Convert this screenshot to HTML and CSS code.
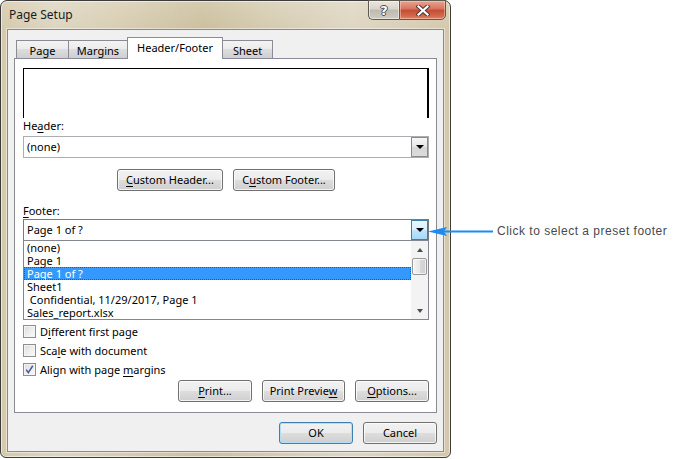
FILE: index.html
```html
<!DOCTYPE html>
<html lang="en">
<head>
<meta charset="utf-8">
<title>Page Setup</title>
<link rel="stylesheet" href="styles.css">
</head>
<body>
<div class="stage">
  <div class="window">
    <div class="titlebar">
      <span class="title">Page Setup</span>
      <div class="caption">
        <span class="cap-btn help"><span class="help-glyph">?</span></span>
        <span class="cap-btn close">
          <svg width="14" height="11" viewBox="0 0 14 11">
            <path d="M2.5 1.5 L11.5 9.5 M11.5 1.5 L2.5 9.5" stroke="#4a3a36" stroke-width="4.2" stroke-linecap="square"/>
            <path d="M2.5 1.5 L11.5 9.5 M11.5 1.5 L2.5 9.5" stroke="#ffffff" stroke-width="2.2" stroke-linecap="square"/>
          </svg>
        </span>
      </div>
    </div>

    <div class="client">
      <div class="tabs">
        <span class="tab tab-page">Page</span>
        <span class="tab tab-margins">Margins</span>
        <span class="tab tab-hf active">Header/Footer</span>
        <span class="tab tab-sheet">Sheet</span>
      </div>

      <div class="panel">
        <div class="preview"></div>

        <div class="field-label">He<u>a</u>der:</div>
        <div class="select">
          <span class="select-value">(none)</span>
          <span class="drop-btn"><span class="tri-down"></span></span>
        </div>

        <div class="custom-row">
          <button class="btn btn-custom-header"><u>C</u>ustom Header...</button>
          <button class="btn btn-custom-footer">C<u>u</u>stom Footer...</button>
        </div>

        <div class="field-label footer-label"><u>F</u>ooter:</div>
        <div class="select select-open">
          <span class="select-value">Page 1 of ?</span>
          <span class="drop-btn hot"><span class="tri-down"></span></span>
        </div>

        <div class="listbox">
          <ul class="list-items">
            <li>(none)</li>
            <li>Page 1</li>
            <li class="selected">Page 1 of ?</li>
            <li>Sheet1</li>
            <li>&nbsp;Confidential, 11/29/2017, Page 1</li>
            <li>Sales_report.xlsx</li>
          </ul>
          <div class="scrollbar">
            <span class="sb-arrow"><span class="tri-up-small"></span></span>
            <div class="sb-track">
              <span class="sb-thumb"></span>
            </div>
            <span class="sb-arrow"><span class="tri-down-small"></span></span>
          </div>
        </div>

        <div class="checks">
          <label class="check-row"><span class="checkbox"></span><span>D<u>i</u>fferent first page</span></label>
          <label class="check-row"><span class="checkbox"></span><span>Sca<u>l</u>e with document</span></label>
          <label class="check-row"><span class="checkbox checked">
            <svg width="11" height="11" viewBox="0 0 11 11"><path d="M2.2 5.6 L4.3 8.6 L8.8 1.8" fill="none" stroke="#4a5f9c" stroke-width="1.6"/></svg>
          </span><span>Align with page <u>m</u>argins</span></label>
        </div>

        <div class="panel-buttons">
          <button class="btn btn-print"><u>P</u>rint...</button>
          <button class="btn btn-preview">Print Previe<u>w</u></button>
          <button class="btn btn-options"><u>O</u>ptions...</button>
        </div>
      </div>

      <div class="dialog-buttons">
        <button class="btn btn-default">OK</button>
        <button class="btn">Cancel</button>
      </div>
    </div>
  </div>

  <div class="callout">
    <svg class="callout-arrow" width="66" height="11" viewBox="0 0 66 11">
      <path d="M16 5.5 H65" stroke="#1b8cf6" stroke-width="2"/>
      <path d="M0 5.5 L19 1 L16 5.5 L19 10 Z" fill="#1b8cf6"/>
    </svg>
    <span class="callout-text">Click to select a preset footer</span>
  </div>
</div>
</body>
</html>
```

FILE: styles.css
```css
* {
  box-sizing: border-box;
}

html,
body {
  margin: 0;
  padding: 0;
  background: #ffffff;
}

body {
  width: 675px;
  height: 459px;
  overflow: hidden;
  font-family: "Noto Sans", "Open Sans", sans-serif;
  font-size: 11px;
  color: #000000;
}

u {
  text-decoration: underline;
  text-underline-offset: 2px;
}

.stage {
  position: relative;
  width: 675px;
  height: 459px;
}

/* ---- window frame ---- */
.window {
  width: 451px;
  height: 458px;
  border: 1px solid #3c3c3c;
  border-radius: 7px 7px 6px 6px;
  background:
    linear-gradient(to bottom, rgba(255, 255, 255, 0.18), rgba(255, 255, 255, 0) 30px),
    linear-gradient(to right, #d4c9aa 0%, #ddd5bf 12%, #d8ceb3 25%, #cbbf9d 45%, #d5cbb0 60%, #ded6c2 78%, #d3c8a9 100%);
  box-shadow: inset 0 0 0 1px rgba(255, 255, 255, 0.55);
  display: flex;
  flex-direction: column;
}

.titlebar {
  height: 28px;
  display: flex;
  align-items: flex-start;
  padding-left: 8px;
}

.title {
  font-size: 12px;
  line-height: 28px;
  color: #1b1b1b;
}

.caption {
  margin-left: auto;
  margin-right: 4px;
  margin-top: -1px;
  display: flex;
}

.cap-btn {
  height: 20px;
  display: flex;
  align-items: center;
  justify-content: center;
  border: 1px solid #5e5a50;
}

.help {
  width: 31px;
  border-right: none;
  border-radius: 0 0 0 5px;
  background: linear-gradient(to bottom, #e9e6de 0%, #d9d5cb 45%, #bfbab0 50%, #cfcbc2 100%);
  box-shadow: inset 0 0 0 1px rgba(255, 255, 255, 0.5);
}

.help-glyph {
  font-family: "DejaVu Sans", sans-serif;
  font-weight: bold;
  font-size: 13px;
  color: #ffffff;
  line-height: 1;
  text-shadow: 1px 0 0 #4a4a4a, -1px 0 0 #4a4a4a, 0 1px 0 #4a4a4a, 0 -1px 0 #4a4a4a;
}

.close {
  width: 47px;
  border-radius: 0 0 5px 0;
  background: linear-gradient(to bottom, #e8a493 0%, #d7725c 45%, #c44c30 50%, #d26b4e 85%, #e08a6b 100%);
  box-shadow: inset 0 0 0 1px rgba(255, 220, 210, 0.45);
}

/* ---- client area ---- */
.client {
  margin-left: 6px;
  width: 437px;
  height: 423px;
  background: #f0f0f0;
  border: 1px solid #8d8a80;
  box-shadow: 0 0 0 1px rgba(255, 255, 255, 0.45);
  display: flex;
  flex-direction: column;
}

.tabs {
  margin-top: 7px;
  margin-left: 8px;
  height: 22px;
  margin-bottom: -1px;
  display: flex;
  align-items: flex-end;
  position: relative;
  z-index: 1;
}

.tab {
  height: 18px;
  margin-bottom: 1px;
  border: 1px solid #898c95;
  border-bottom: none;
  background: linear-gradient(to bottom, #f3f3f3 0%, #ebebeb 50%, #dddddd 50%, #cfcfcf 100%);
  display: flex;
  align-items: center;
  justify-content: center;
  line-height: 1;
  padding-top: 1px;
}

.tab + .tab {
  margin-left: -1px;
}

.tab-page { width: 53px; }
.tab-margins { width: 60px; }
.tab-hf { width: 96px; }
.tab-sheet { width: 51px; }

.tab.active {
  height: 22px;
  margin-bottom: 0;
  background: #ffffff;
  padding-top: 0;
  padding-bottom: 3px;
  position: relative;
  z-index: 2;
}

.panel {
  margin-left: 6px;
  width: 423px;
  height: 355px;
  border: 1px solid #898c95;
  background: #ffffff;
  padding: 0 7px 10px 8px;
  display: flex;
  flex-direction: column;
}

.preview {
  margin-top: 9px;
  height: 50px;
  border-top: 1px solid #000000;
  border-left: 1px solid #000000;
  border-right: 2px solid #000000;
}

.field-label {
  height: 15px;
  line-height: 15px;
}

.footer-label {
  margin-top: 12px;
}

.select {
  margin-top: 3px;
  height: 22px;
  border: 1px solid #abadb3;
  background: #ffffff;
  display: flex;
  align-items: center;
}

.select-open {
  margin-top: 1px;
  border-color: #7a7a7a;
}

.select-value {
  flex: 1;
  padding-left: 3px;
  line-height: 20px;
}

.drop-btn {
  width: 17px;
  height: 20px;
  border: 1px solid #8a8a8a;
  background: linear-gradient(to bottom, #f6f6f6 0%, #e6e6e6 50%, #d6d6d6 51%, #dcdcdc 100%);
  display: flex;
  align-items: center;
  justify-content: center;
}

.drop-btn.hot {
  border-color: #3c7fb1;
  background: linear-gradient(to bottom, #eaf6fd 0%, #d9f0fc 50%, #bee6fd 51%, #a7d9f5 100%);
}

.tri-down {
  width: 0;
  height: 0;
  border-left: 4px solid transparent;
  border-right: 4px solid transparent;
  border-top: 4px solid #000000;
}

.custom-row {
  margin-top: 11px;
  display: flex;
  justify-content: center;
  gap: 10px;
}

/* ---- buttons ---- */
.btn {
  height: 22px;
  padding: 0;
  border: 1px solid #707070;
  border-radius: 3px;
  background: linear-gradient(to bottom, #f2f2f2 0%, #ebebeb 50%, #dddddd 51%, #cfcfcf 100%);
  box-shadow: inset 0 0 0 1px rgba(255, 255, 255, 0.75);
  font-family: inherit;
  font-size: 11px;
  color: #000000;
  line-height: 18px;
  width: 74px;
}

.btn-custom-header { width: 106px; }
.btn-custom-footer { width: 102px; }
.btn-preview { width: 83px; }

.btn-default {
  border-color: #3c7fb1;
  box-shadow: inset 0 0 0 1px #b3def7;
}

/* ---- list box ---- */
.listbox {
  margin-top: -1px;
  height: 80px;
  border: 1px solid #828790;
  background: #ffffff;
  display: flex;
}

.list-items {
  flex: 1;
  list-style: none;
  margin: 0;
  padding: 0;
}

.list-items li {
  height: 13px;
  line-height: 13px;
  padding-left: 3px;
  white-space: pre;
}

.list-items li.selected {
  background: #3399ff;
  color: #ffffff;
  outline: 1px dotted #1a5ea8;
  outline-offset: -1px;
}

.scrollbar {
  width: 17px;
  background: #f3f3f3;
  display: flex;
  flex-direction: column;
}

.sb-arrow {
  height: 17px;
  display: flex;
  align-items: center;
  justify-content: center;
}

.sb-track {
  flex: 1;
  padding: 0 1px;
}

.sb-thumb {
  display: block;
  height: 17px;
  border: 1px solid #989898;
  border-radius: 2px;
  background: linear-gradient(to right, #f4f4f4 0%, #e8e8e8 50%, #d9d9d9 51%, #cfcfcf 100%);
  box-shadow: inset 0 0 0 1px rgba(255, 255, 255, 0.7);
}

.tri-up-small {
  width: 0;
  height: 0;
  border-left: 3.5px solid transparent;
  border-right: 3.5px solid transparent;
  border-bottom: 4px solid #4d4d4d;
}

.tri-down-small {
  width: 0;
  height: 0;
  border-left: 3.5px solid transparent;
  border-right: 3.5px solid transparent;
  border-top: 4px solid #4d4d4d;
}

/* ---- check boxes ---- */
.checks {
  margin-top: 2px;
  display: flex;
  flex-direction: column;
}

.check-row {
  height: 19px;
  display: flex;
  align-items: center;
  gap: 4px;
}

.checkbox {
  width: 13px;
  height: 13px;
  border: 1px solid #8e8f8f;
  background: linear-gradient(135deg, #dcdcdc 0%, #f0f0f0 60%, #fafafa 100%);
  box-shadow: inset 0 0 0 1px #f4f4f4;
  display: flex;
  align-items: center;
  justify-content: center;
}

.panel-buttons {
  margin-top: 1px;
  display: flex;
  justify-content: flex-end;
  gap: 10px;
}

.dialog-buttons {
  margin-top: 9px;
  margin-right: 6px;
  display: flex;
  justify-content: flex-end;
  gap: 10px;
}

/* ---- annotation ---- */
.callout {
  position: absolute;
  left: 428px;
  top: 224px;
  display: flex;
  align-items: center;
  gap: 3px;
}

.callout-arrow {
  display: block;
}

.callout-text {
  font-family: "Liberation Sans", Arial, sans-serif;
  font-size: 12px;
  color: #4a4a4a;
  letter-spacing: 0.5px;
}
```
